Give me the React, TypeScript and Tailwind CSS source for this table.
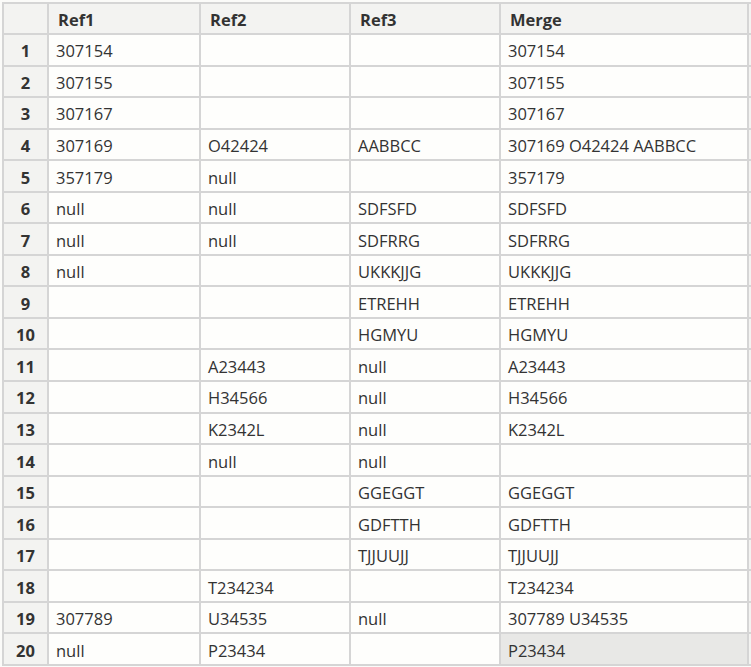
import { Fragment } from 'react';

const headers = ['', 'Ref1', 'Ref2', 'Ref3', 'Merge'];

const rows: string[][] = [
  ['307154', '', '', '307154'],
  ['307155', '', '', '307155'],
  ['307167', '', '', '307167'],
  ['307169', 'O42424', 'AABBCC', '307169 O42424 AABBCC'],
  ['357179', 'null', '', '357179'],
  ['null', 'null', 'SDFSFD', 'SDFSFD'],
  ['null', 'null', 'SDFRRG', 'SDFRRG'],
  ['null', '', 'UKKKJJG', 'UKKKJJG'],
  ['', '', 'ETREHH', 'ETREHH'],
  ['', '', 'HGMYU', 'HGMYU'],
  ['', 'A23443', 'null', 'A23443'],
  ['', 'H34566', 'null', 'H34566'],
  ['', 'K2342L', 'null', 'K2342L'],
  ['', 'null', 'null', ''],
  ['', '', 'GGEGGT', 'GGEGGT'],
  ['', '', 'GDFTTH', 'GDFTTH'],
  ['', '', 'TJJUUJJ', 'TJJUUJJ'],
  ['', 'T234234', '', 'T234234'],
  ['307789', 'U34535', 'null', '307789 U34535'],
  ['null', 'P23434', '', 'P23434'],
];

export default function App() {
  return (
    <div
      className="w-[751px] h-[667px] overflow-hidden bg-[#fbfbf9] pt-[2px] pl-[2px] text-[#333333]"
      style={{ fontFamily: '"Open Sans", "Noto Sans", sans-serif' }}
    >
      <div className="inline-grid grid-cols-[43px_150px_148px_148px_246px_4px] grid-rows-[29px_repeat(20,29.55px)] gap-[2px] bg-[#d5d5d5] p-[2px] pr-0 text-[16.5px]">
        {/* header */}
        {headers.map((h, i) => (
          <div key={i} className="flex items-center bg-[#f3f3f1] pl-[9px] pt-[4px] font-bold">
            {h}
          </div>
        ))}
        <div className="bg-[#f3f3f1]" />

        {rows.map((r, ri) => (
          <Fragment key={ri}>
            <div className="flex items-center justify-center bg-[#f3f3f1] pt-[4px] font-bold">
              {ri + 1}
            </div>
            {r.map((c, ci) => (
              <div
                key={ci}
                className={`flex items-center pl-[7px] pt-[4px] whitespace-nowrap ${
                  ri === 19 && ci === 3 ? 'bg-[#e8e8e6]' : 'bg-[#fefefc]'
                }`}
              >
                {c}
              </div>
            ))}
            <div className="bg-[#f3f3f1]" />
          </Fragment>
        ))}
      </div>
    </div>
  );
}
